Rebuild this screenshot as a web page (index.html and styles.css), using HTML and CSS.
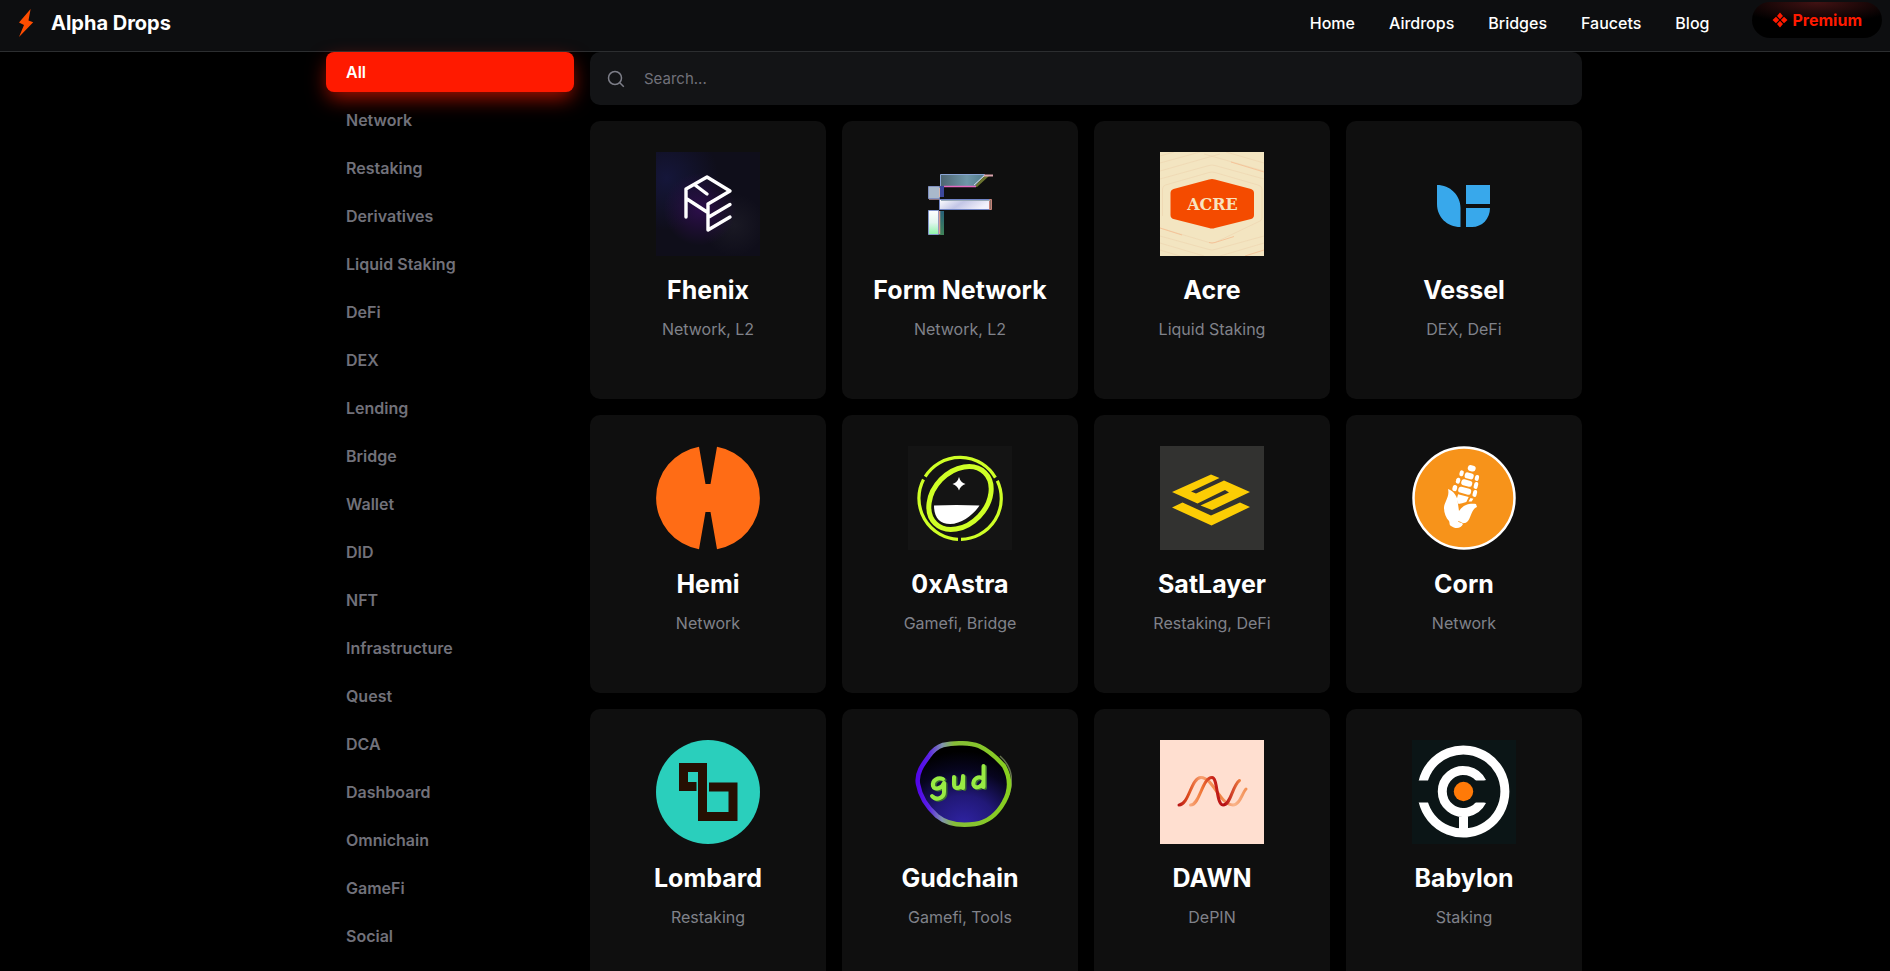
FILE: index.html
```html
<!DOCTYPE html>
<html lang="en">
<head>
<meta charset="utf-8">
<title>Alpha Drops</title>
<link rel="stylesheet" href="styles.css">
</head>
<body>
<header class="topbar">
  <a class="brand" href="#">
    <svg class="brand-icon" viewBox="0 0 16 28" aria-hidden="true"><path fill="#ff4d00" d="M12.600 0 1 13.500 6 16 1 28 15.200 13.300 10.500 11.500z"/></svg>
    <span>Alpha Drops</span>
  </a>
  <nav class="links" aria-label="Main">
    <a href="#">Home</a>
    <a href="#">Airdrops</a>
    <a href="#">Bridges</a>
    <a href="#">Faucets</a>
    <a href="#">Blog</a>
  </nav>
  <a class="premium" href="#">
    <svg class="premium-icon" viewBox="0 0 16 16" aria-hidden="true"><path fill="currentColor" d="M8 .5 11 4 8 7.200 5 4zM4 4.800 7.200 8 4 11.200.5 8zM12 4.800 15.500 8 12 11.200 8.800 8zM8 8.800 11 12 8 15.500 5 12z"/></svg>
    <span>Premium</span>
  </a>
</header>
<div class="page">
  <nav class="categories" aria-label="Categories">
    <button class="category active" type="button">All</button>
    <button class="category" type="button">Network</button>
    <button class="category" type="button">Restaking</button>
    <button class="category" type="button">Derivatives</button>
    <button class="category" type="button">Liquid Staking</button>
    <button class="category" type="button">DeFi</button>
    <button class="category" type="button">DEX</button>
    <button class="category" type="button">Lending</button>
    <button class="category" type="button">Bridge</button>
    <button class="category" type="button">Wallet</button>
    <button class="category" type="button">DID</button>
    <button class="category" type="button">NFT</button>
    <button class="category" type="button">Infrastructure</button>
    <button class="category" type="button">Quest</button>
    <button class="category" type="button">DCA</button>
    <button class="category" type="button">Dashboard</button>
    <button class="category" type="button">Omnichain</button>
    <button class="category" type="button">GameFi</button>
    <button class="category" type="button">Social</button>
  </nav>
  <main class="content">
    <label class="search">
      <svg class="search-icon" viewBox="0 0 18 18" fill="none" stroke="currentColor" stroke-width="1.500" aria-hidden="true"><circle cx="8" cy="8" r="6.500"/><path d="m12.800 12.800 4 4"/></svg>
      <input type="search" placeholder="Search..." aria-label="Search">
    </label>
    <div class="grid">
      <a class="card" href="#">
        <svg class="logo" viewBox="0 0 104 104" aria-hidden="true">
          <defs>
            <radialGradient id="fh1" cx=".42" cy=".55" r=".35"><stop offset="0" stop-color="#2c0e4a"/><stop offset="1" stop-color="#2c0e4a" stop-opacity="0"/></radialGradient>
            <radialGradient id="fh2" cx=".1" cy=".25" r=".5"><stop offset="0" stop-color="#15163a"/><stop offset="1" stop-color="#15163a" stop-opacity="0"/></radialGradient>
            <radialGradient id="fh3" cx=".75" cy=".7" r=".3"><stop offset="0" stop-color="#1a1924"/><stop offset="1" stop-color="#1a1924" stop-opacity="0"/></radialGradient>
          </defs>
          <path fill="#0f0e1a" d="M0 0h104v104H0z"/><path fill="url(#fh2)" d="M0 0h104v104H0z"/><path fill="url(#fh3)" d="M0 0h104v104H0z"/><path fill="url(#fh1)" d="M0 0h104v104H0z"/>
          <path fill="none" stroke="#fff" stroke-width="3.400" stroke-linecap="round" stroke-linejoin="round" d="M30 65V37L51 25 74 39 52 52V78L74 65M52 65.500 74 52.500M31 47 51 60M39 33 51 42"/>
        </svg>
        <h2>Fhenix</h2>
        <p>Network, L2</p>
      </a>
      <a class="card" href="#">
        <svg class="logo" viewBox="0 0 104 104" aria-hidden="true">
          <defs>
            <linearGradient id="fo1"><stop offset="0" stop-color="#4d6470"/><stop offset=".6" stop-color="#6f96a8"/><stop offset="1" stop-color="#517c8c"/></linearGradient>
            <linearGradient id="fo2" x2="1" y2=".3"><stop offset="0" stop-color="#fff"/><stop offset=".5" stop-color="#c3c6e6"/><stop offset="1" stop-color="#f2f1fb"/></linearGradient>
            <linearGradient id="fo3" x2="0" y2="1"><stop offset="0" stop-color="#fff"/><stop offset=".5" stop-color="#e2f6ef"/><stop offset="1" stop-color="#8cf5a8"/></linearGradient>
            <linearGradient id="fo4" x2="0" y2="1"><stop offset="0" stop-color="#276078"/><stop offset="1" stop-color="#3f8358"/></linearGradient>
          </defs>
          <path fill="url(#fo1)" stroke="#8aa6d5" d="M32.500 22.500h44l-10 12h-34z"/>
          <path fill="#6b7430" d="m77 23 4 1-12 11h-3z"/><path stroke="#dca5ad" stroke-width="2" d="M76 23.500h9"/>
          <path stroke="#e56bc0" stroke-width="1.500" d="M36 34.500h32"/><path stroke="#d5dadd" d="m66 33 10-9" />
          <path fill="#a9b9cb" stroke="#8090c0" d="M20.500 34.500h11v12h-11z"/><path fill="#3c479c" d="M32 34h4v11h-4z"/><path stroke="#d7b6ad" d="M31.500 36v9"/>
          <path stroke="#8c717b" d="M21 47.500h14"/>
          <path fill="url(#fo2)" stroke="#7084c5" d="M31.500 47.500h50v10h-50z"/><path fill="#8a6d64" stroke="#c48278" d="M81.500 47.500h2v10h-2z"/><path stroke="#99aab8" d="M33 48.500h49"/>
          <path fill="url(#fo4)" d="M31 59h5v24h-5z"/><path fill="url(#fo3)" stroke="#8496cb" d="M20.500 58.500h10v24h-10z"/><path stroke="#dc9d92" stroke-width="1.500" d="M31.500 59v23"/>
        </svg>
        <h2>Form Network</h2>
        <p>Network, L2</p>
      </a>
      <a class="card" href="#">
        <svg class="logo" viewBox="0 0 104 104" aria-hidden="true">
          <path fill="#f3e5c1" d="M0 0h104v104H0z"/>
          <g fill="none" stroke="#eed6b0" stroke-width=".7">
            <path d="M2.500 64V37q0-3 3-4L49 20.500q3-1 6 0L98 33q4 1 4 4v29q0 3-4 4L55 90.500q-3 1-6 0L0 76"/>
            <path d="M0 27 49 13.500q3-1 6 0L104 27M0 19 60 2M0 11 40 0M104 19 44 2M104 11 66 0M0 4 14 0M104 84 55 97.500q-3 1-6 0L0 84M0 91 44 104M104 91 60 104M0 98l20 6"/>
          </g>
          <path fill="none" stroke="#f5bd90" stroke-width=".8" d="m71 10 33 10M49 90.500q3 1 6 0l19-6M85 104l19-6M0 76l22 7"/>
          <path fill="#f44b00" d="M13.500 37 49 27.500q3-1 6 0L91 37q3 1 3 4v22q0 3-3 4L55 76q-3 1-6 0L13.500 67Q10.500 66 10.500 63V41q0-3 3-4z"/>
          <text class="acre-word" x="52.500" y="57.500" text-anchor="middle">ACRE</text>
        </svg>
        <h2>Acre</h2>
        <p>Liquid Staking</p>
      </a>
      <a class="card" href="#">
        <svg class="logo" viewBox="0 0 104 104" aria-hidden="true"><path fill="#38a8eb" d="M25 33C38 33 48.500 43 48.500 56V75C35 75 25 65 25 52zM54 33h24v19H54zM54 56h24c0 11-8 19-18 19h-6z"/></svg>
        <h2>Vessel</h2>
        <p>DEX, DeFi</p>
      </a>
      <a class="card" href="#">
        <svg class="logo" viewBox="0 0 104 104" aria-hidden="true"><path fill="#ff6c15" d="M43 .8 49.500 38h5L61 .8a52 52 0 0 1 0 102.400L54.500 66h-5L43 103.200A52 52 0 0 1 43 .8z"/></svg>
        <h2>Hemi</h2>
        <p>Network</p>
      </a>
      <a class="card" href="#">
        <svg class="logo" viewBox="0 0 104 104" aria-hidden="true">
          <path fill="#141414" d="M0 0h104v104H0z"/>
          <g fill="none" stroke="#cfff26">
            <path stroke-width="3.200" d="M17.200 30.600A41 41 0 0 1 87.400 31.600M89.300 34.700A41 41 0 0 1 53 93.300M50 93.300A41 41 0 0 1 15.500 33.500"/>
            <ellipse cx="52" cy="52" rx="35.500" ry="26.500" stroke-width="5" transform="rotate(-46 52 52)"/>
          </g>
          <path fill="#fff" d="M26 59.500q22-1 45.500 0C66 68 54 78 42 78 32 78 26 72 26 59.500zM51 31q1.500 5.500 6.500 7-5 1.500-6.500 6.500-1.500-5-6.500-6.500 5-1.500 6.500-7z"/>
        </svg>
        <h2>0xAstra</h2>
        <p>Gamefi, Bridge</p>
      </a>
      <a class="card" href="#">
        <svg class="logo" viewBox="0 0 104 104" aria-hidden="true"><path fill="#323230" d="M0 0h104v104H0z"/><path fill="#fccd04" d="M12 46 51 28.500 59.500 32 31 45.500 36 47.500 64 34.500 90 46 52 64 40.500 59.500 69 46.500 65 44 37.500 57.500zM12 61.500 22.500 56.500 51 69.500 80 56.500 90 61 51.500 79.500z"/></svg>
        <h2>SatLayer</h2>
        <p>Restaking, DeFi</p>
      </a>
      <a class="card" href="#">
        <svg class="logo" viewBox="0 0 104 104" aria-hidden="true">
          <circle cx="52" cy="52" r="50.500" fill="#f7931a" stroke="#fff" stroke-width="2.500"/>
          <g fill="#fff">
            <g transform="rotate(15 56 42)">
              <rect x="50.500" y="19" width="8" height="6" rx="3"/>
              <rect x="44" y="26.500" width="4" height="6" rx="2"/><rect x="49.500" y="27" width="9" height="6" rx="2.500"/><rect x="60" y="27" width="4" height="6" rx="2"/>
              <rect x="42.500" y="34.500" width="4" height="6" rx="2"/><rect x="48" y="34.500" width="11" height="6" rx="2.500"/><rect x="61" y="34" width="4" height="7" rx="2"/>
              <rect x="41" y="42.500" width="4.500" height="6" rx="2"/><rect x="47" y="42.500" width="13" height="6" rx="2.500"/><rect x="62" y="42" width="4" height="7" rx="2"/>
              <path d="M48 50.500h11l-1 5.500q-4 2.500-7 4l-3-4zM61 51h3l-1 3-3 1z"/>
            </g>
            <path d="M36 43c6 2 10 8 10 15l1 7c4-6 10-8 17-7l1 3c-6 2-6 12-10 15-3 2-5 1-6 0l-3-1c0 2 4 1 5 3-2 5-8 5-12 2-2-1-1-3-2-5-3-3-5-8-5-13 0-6 6-11 4-19z"/>
          </g>
        </svg>
        <h2>Corn</h2>
        <p>Network</p>
      </a>
      <a class="card" href="#">
        <svg class="logo" viewBox="0 0 104 104" aria-hidden="true"><circle cx="52" cy="52" r="52" fill="#2acfbc"/><path fill="none" stroke="#260f02" stroke-width="9" d="M40.500 46.500h-13V27.500h19V76.500h30.500V47H53"/></svg>
        <h2>Lombard</h2>
        <p>Restaking</p>
      </a>
      <a class="card" href="#">
        <svg class="logo" viewBox="0 0 104 104" aria-hidden="true">
          <defs>
            <radialGradient id="gu1" cx=".5" cy="1" r=".9"><stop offset="0" stop-color="#2f23a3"/><stop offset=".4" stop-color="#211877"/><stop offset=".75" stop-color="#07051f"/><stop offset="1" stop-color="#000"/></radialGradient>
            <linearGradient id="gu2"><stop offset="0" stop-color="#5206e8"/><stop offset=".12" stop-color="#5a20e6"/><stop offset=".27" stop-color="#8095ae"/><stop offset=".4" stop-color="#86bd37"/><stop offset="1" stop-color="#88cf20"/></linearGradient>
          </defs>
          <path fill="none" stroke="#65734e" stroke-width="1.500" d="M92 16c9 8 13 19 11 31-2 12-10 21-17 28"/>
          <path fill="url(#gu1)" stroke="url(#gu2)" stroke-width="4.500" stroke-linejoin="round" d="M35 5c12-3 28-2 36 1 11 5 18 12 25 20 6 11 7 24 0 36-6 11-16 20-29 22-14 2-27 1-38-8C20 68 12 56 10 44 8 33 15 24 21 16 25 10 29 7 35 5z"/>
          <g fill="none" stroke-width="4" stroke-linecap="round" stroke-linejoin="round">
            <path stroke="#3d6f30" d="M36.500 40c-5-2-11 1-10 7 1 4 9 3 11-3v9c0 6-8 9-12 4M47.500 38c0 7-1 11 3 11 4 0 6-5 6-12v12M77 40c-5-4-11 0-10 6 2 5 10 1 10-4V27v21"/>
            <path stroke="#98eb43" d="M35 39c-5-2-11 1-10 7 1 4 9 3 11-3v9c0 6-8 9-12 4M46 37c0 7-1 11 3 11 4 0 6-5 6-12v12M75.500 39c-5-4-11 0-10 6 2 5 10 1 10-4V26v21"/>
          </g>
        </svg>
        <h2>Gudchain</h2>
        <p>Gamefi, Tools</p>
      </a>
      <a class="card" href="#">
        <svg class="logo" viewBox="0 0 104 104" aria-hidden="true">
          <defs>
            <linearGradient id="da1" gradientUnits="userSpaceOnUse" x1="18" x2="88" y1="0" y2="0"><stop offset="0" stop-color="#b71314"/><stop offset=".16" stop-color="#e05220"/><stop offset=".33" stop-color="#f7a070"/><stop offset=".6" stop-color="#f08040"/><stop offset=".8" stop-color="#f9b58c"/><stop offset="1" stop-color="#f28a4c"/></linearGradient>
            <linearGradient id="da2" gradientUnits="userSpaceOnUse" x1="29" x2="81" y1="0" y2="0"><stop offset="0" stop-color="#f8ad82"/><stop offset=".25" stop-color="#f07535"/><stop offset=".45" stop-color="#c9261a"/><stop offset=".68" stop-color="#b50d14"/><stop offset="1" stop-color="#f28542"/></linearGradient>
          </defs>
          <path fill="#ffdfd0" d="M0 0h104v104H0z"/>
          <g fill="none" stroke-width="3" stroke-linecap="round">
            <path stroke="url(#da1)" d="M19 65C29 65 31 37.500 41 37.500 53 37.500 60 65 73 65 80 65 82 53 86 49"/>
            <path stroke="url(#da2)" d="M30.500 65C40 65 42 37.500 52 37.500 58 37.500 56 65 63 65 71 65 72 46 79.500 40.500"/>
          </g>
        </svg>
        <h2>DAWN</h2>
        <p>DePIN</p>
      </a>
      <a class="card" href="#">
        <svg class="logo" viewBox="0 0 104 104" aria-hidden="true">
          <path fill="#0b1516" d="M0 0h104v104H0z"/>
          <g fill="none" stroke="#fff" stroke-width="9">
            <path d="M11 42A41.500 41.500 0 1 1 11 61"/>
            <path d="M70 42A21 21 0 1 0 70 61M51.500 72v22"/>
          </g>
          <path fill="#0b1516" d="M0 40.500h20v22H0zM62 40.500h20v22H62z"/>
          <circle cx="51.500" cy="51.500" r="9.700" fill="#ff7a08"/>
        </svg>
        <h2>Babylon</h2>
        <p>Staking</p>
      </a>
    </div>
  </main>
</div>
</body>
</html>
```
FILE: styles.css
```css
* { box-sizing: border-box; }

body {
  margin: 0;
  height: 100vh;
  overflow: hidden;
  background: #000;
  color: #fff;
  font-family: Inter, "Liberation Sans", sans-serif;
  font-size: 16px;
  line-height: 24px;
}

a { color: inherit; text-decoration: none; }
button, input { font: inherit; }

.topbar {
  display: flex;
  align-items: center;
  height: 52px;
  padding: 2px 8px 8px 18px;
  background: #0d0e10;
  border-bottom: 1px solid #2c2e30;
}

.brand {
  display: flex;
  align-items: center;
  gap: 17px;
  margin-right: auto;
  font-size: 20px;
  font-weight: 700;
}
.brand-icon { width: 16px; height: 28px; }

.links { display: flex; gap: 34px; font-weight: 500; }

.premium {
  display: flex;
  align-self: flex-start;
  align-items: center;
  gap: 4px;
  height: 36px;
  margin-left: 43px;
  padding: 0 20px;
  border-radius: 18px;
  background: radial-gradient(ellipse 65% 60% at 50% 0, #421213, #000);
  color: #ff1a00;
  font-weight: 700;
}
.premium-icon { width: 16px; height: 16px; }

.page {
  display: grid;
  grid-template-columns: 248px minmax(0, 1fr);
  gap: 16px;
  max-width: 1274px;
  margin: 0 auto;
  padding-left: 18px;
}

.categories { display: flex; flex-direction: column; gap: 8px; }
.category {
  padding: 8px 20px;
  border: 0;
  border-radius: 8px;
  background: none;
  color: #71717a;
  font-weight: 600;
  text-align: left;
}
.category.active {
  background: #ff1a00;
  color: #fff;
  box-shadow: 0 8px 20px -2px rgba(255, 26, 0, 0.65);
}

.content { display: flex; flex-direction: column; gap: 16px; }

.search {
  display: flex;
  align-items: center;
  gap: 19px;
  height: 53px;
  padding: 0 17px;
  border-radius: 10px;
  background: #131416;
  color: #7d7e88;
}
.search-icon { width: 18px; height: 18px; }
.search input {
  flex: 1;
  padding: 0;
  border: 0;
  outline: 0;
  background: none;
  color: #fff;
  font-size: 15px;
}
.search input::placeholder { color: #71717a; opacity: 1; }

.grid {
  display: grid;
  grid-template-columns: repeat(4, minmax(0, 1fr));
  gap: 16px;
}
.card {
  display: flex;
  flex-direction: column;
  align-items: center;
  padding: 31px 16px 58px;
  border-radius: 10px;
  background: #0f0f0f;
}
.logo { width: 104px; height: 104px; margin-bottom: 18px; }
.card h2 { margin: 0 0 11px; font-size: 25px; line-height: 32px; font-weight: 700; }
.card p { margin: 0; color: #80828a; }
.acre-word {
  fill: #f8e3bf;
  font-family: "DejaVu Serif", serif;
  font-size: 16px;
  font-weight: 700;
}
```
